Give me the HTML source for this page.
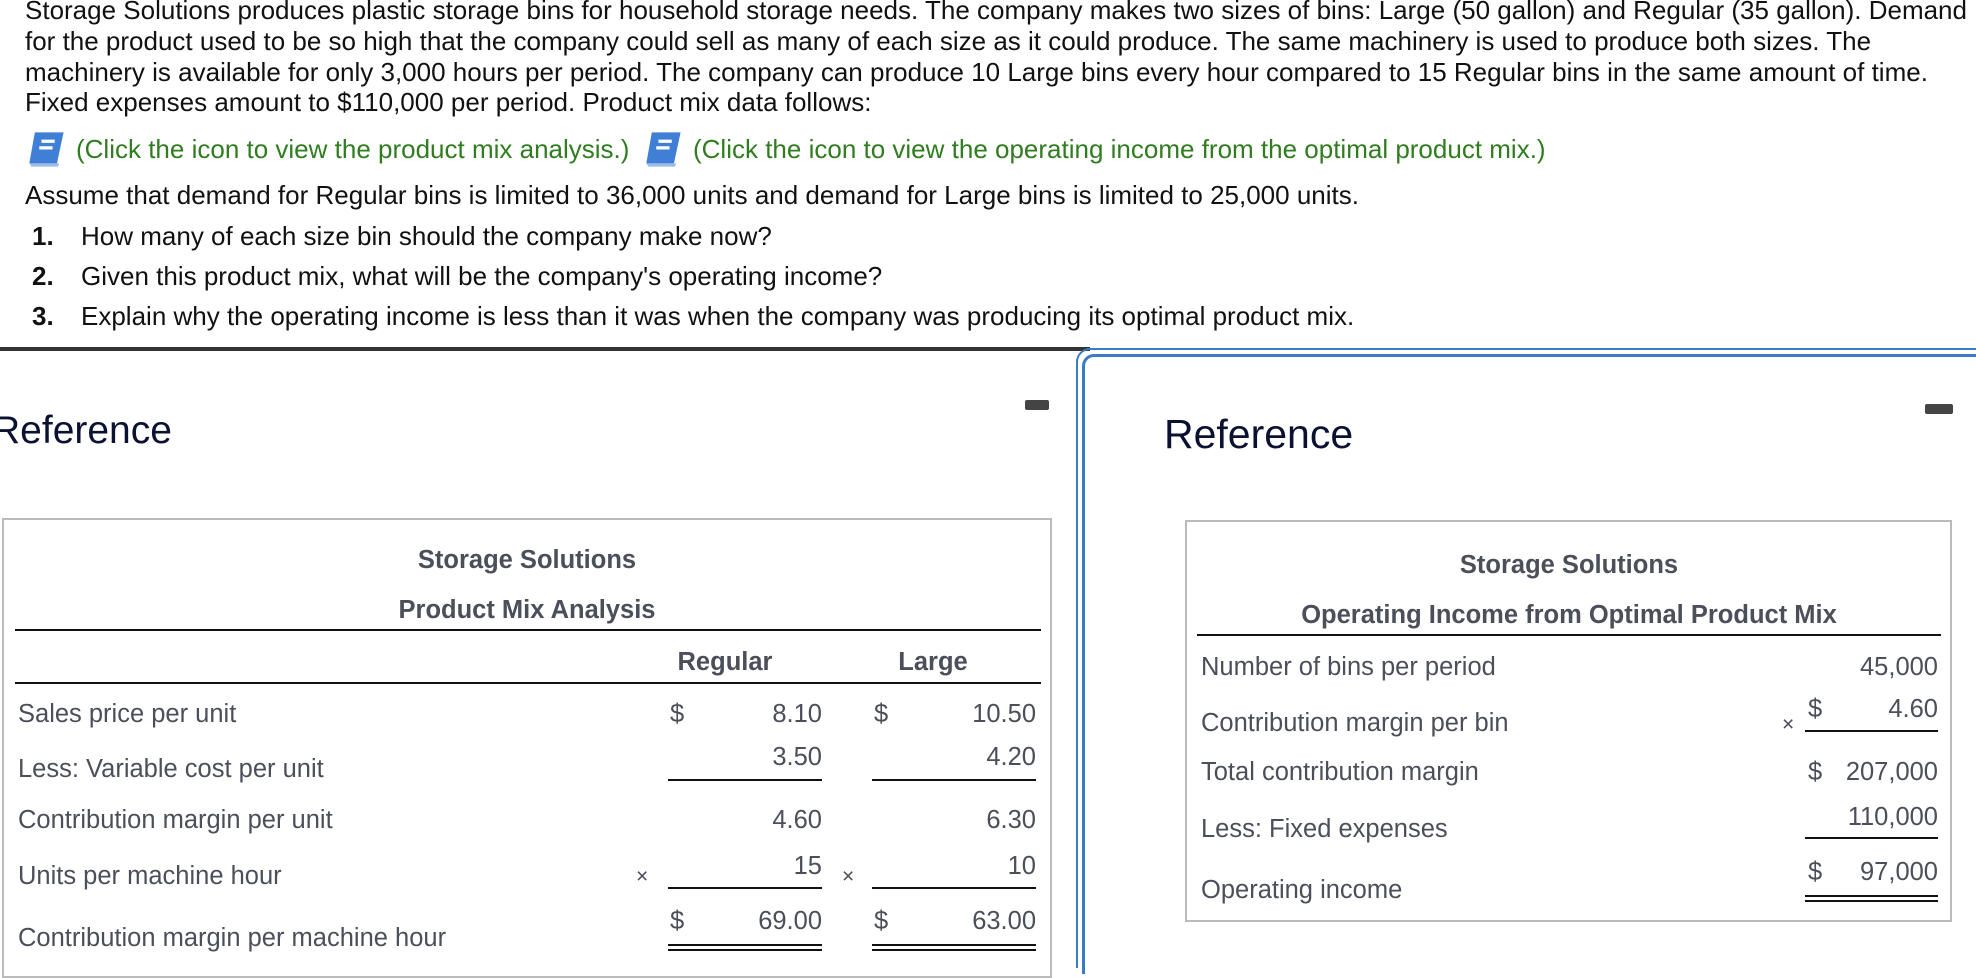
<!DOCTYPE html>
<html><head><meta charset="utf-8"><style>
*{margin:0;padding:0;box-sizing:border-box}
body{width:1976px;height:956px;overflow:hidden;background:#fff;font-family:"Liberation Sans",Arial,sans-serif;position:relative}
.t{position:absolute;white-space:nowrap;line-height:30px;height:30px}
.b{color:#111;font-size:26px}
.g{color:#2f7d1f;font-size:26px}
.tb{color:#4a4f5a;font-size:25.5px}
.h{font-weight:bold;color:#4a4f5a;font-size:25.5px}
.r{text-align:right}
.c{text-align:center}
.x{font-size:21px}
.ln{position:absolute;background:#111;height:2px}
.dl{position:absolute;border-top:2px solid #111;border-bottom:2px solid #111;height:7px}
.icon{position:absolute;width:42px;height:38px}
</style></head><body>
<div class="t b" style="left:25px;top:-5px">Storage Solutions produces plastic storage bins for household storage needs. The company makes two sizes of bins: Large (50 gallon) and Regular (35 gallon). Demand</div>
<div class="t b" style="left:25px;top:26px">for the product used to be so high that the company could sell as many of each size as it could produce. The same machinery is used to produce both sizes. The</div>
<div class="t b" style="left:25px;top:57px">machinery is available for only 3,000 hours per period. The company can produce 10 Large bins every hour compared to 15 Regular bins in the same amount of time.</div>
<div class="t b" style="left:25px;top:87px">Fixed expenses amount to $110,000 per period. Product mix data follows:</div>

<svg class="icon" style="left:26px;top:130px" viewBox="0 0 38 34"><path d="M8 2h26l-6 28H3z" fill="#3f7fd6"/><path d="M3 30l2 3h24l1-3z" fill="#9bbbe8"/><path d="M14 10h12M12 16h12" stroke="#fff" stroke-width="3"/></svg>
<div class="t g" style="left:76px;top:134px">(Click the icon to view the product mix analysis.)</div>
<svg class="icon" style="left:643px;top:130px" viewBox="0 0 38 34"><path d="M8 2h26l-6 28H3z" fill="#3f7fd6"/><path d="M3 30l2 3h24l1-3z" fill="#9bbbe8"/><path d="M14 10h12M12 16h12" stroke="#fff" stroke-width="3"/></svg>
<div class="t g" style="left:693px;top:134px">(Click the icon to view the operating income from the optimal product mix.)</div>

<div class="t b" style="left:25px;top:180px">Assume that demand for Regular bins is limited to 36,000 units and demand for Large bins is limited to 25,000 units.</div>
<div class="t b" style="left:32px;top:221px;font-weight:bold">1.</div><div class="t b" style="left:81px;top:221px">How many of each size bin should the company make now?</div>
<div class="t b" style="left:32px;top:261px;font-weight:bold">2.</div><div class="t b" style="left:81px;top:261px">Given this product mix, what will be the company's operating income?</div>
<div class="t b" style="left:32px;top:301px;font-weight:bold">3.</div><div class="t b" style="left:81px;top:301px">Explain why the operating income is less than it was when the company was producing its optimal product mix.</div>

<div style="position:absolute;left:0;top:347px;width:1090px;height:4px;background:#333"></div>
<div style="position:absolute;left:1076px;top:348px;width:920px;height:620px;border:2px solid #3a7bc8;border-right:none;border-bottom:none;border-top-left-radius:14px"></div>
<div style="position:absolute;left:1082px;top:354px;width:920px;height:620px;border:3px solid #3a7bc8;border-right:none;border-bottom:none;border-top-left-radius:12px"></div>

<div class="t" style="left:-8px;top:407px;font-size:39px;line-height:48px;height:48px;color:#0b1130">Reference</div>
<div style="position:absolute;left:1025px;top:400px;width:24px;height:10px;background:#444;border-radius:2px"></div>
<div class="t" style="left:1164px;top:410px;font-size:41px;line-height:48px;height:48px;color:#0b1130">Reference</div>
<div style="position:absolute;left:1925px;top:404px;width:28px;height:10px;background:#444;border-radius:2px"></div>

<!-- left table -->
<div style="position:absolute;left:2px;top:518px;width:1050px;height:460px;border:2px solid #bbb"></div>
<div class="t h c" style="left:277px;width:500px;top:545px">Storage Solutions</div>
<div class="t h c" style="left:277px;width:500px;top:595px">Product Mix Analysis</div>
<div class="ln" style="left:15px;width:1026px;top:629px"></div>
<div class="t h c" style="left:625px;width:200px;top:647px">Regular</div>
<div class="t h c" style="left:833px;width:200px;top:647px">Large</div>
<div class="ln" style="left:15px;width:1026px;top:682px"></div>

<div class="t tb" style="left:18px;top:699px">Sales price per unit</div>
<div class="t tb" style="left:670px;top:699px">$</div><div class="t tb r" style="left:722px;width:100px;top:699px">8.10</div>
<div class="t tb" style="left:874px;top:699px">$</div><div class="t tb r" style="left:936px;width:100px;top:699px">10.50</div>

<div class="t tb" style="left:18px;top:754px">Less: Variable cost per unit</div>
<div class="t tb r" style="left:722px;width:100px;top:742px">3.50</div>
<div class="t tb r" style="left:936px;width:100px;top:742px">4.20</div>
<div class="ln" style="left:668px;width:154px;top:779px"></div>
<div class="ln" style="left:872px;width:164px;top:779px"></div>

<div class="t tb" style="left:18px;top:805px">Contribution margin per unit</div>
<div class="t tb r" style="left:722px;width:100px;top:805px">4.60</div>
<div class="t tb r" style="left:936px;width:100px;top:805px">6.30</div>

<div class="t tb" style="left:18px;top:861px">Units per machine hour</div>
<div class="t tb x" style="left:636px;top:862px">×</div>
<div class="t tb r" style="left:722px;width:100px;top:851px">15</div>
<div class="t tb x" style="left:842px;top:862px">×</div>
<div class="t tb r" style="left:936px;width:100px;top:851px">10</div>
<div class="ln" style="left:668px;width:154px;top:887px"></div>
<div class="ln" style="left:872px;width:164px;top:887px"></div>

<div class="t tb" style="left:18px;top:923px">Contribution margin per machine hour</div>
<div class="t tb" style="left:670px;top:906px">$</div><div class="t tb r" style="left:722px;width:100px;top:906px">69.00</div>
<div class="t tb" style="left:874px;top:906px">$</div><div class="t tb r" style="left:936px;width:100px;top:906px">63.00</div>
<div class="dl" style="left:668px;width:154px;top:944px"></div>
<div class="dl" style="left:872px;width:164px;top:944px"></div>

<!-- right table -->
<div style="position:absolute;left:1185px;top:520px;width:767px;height:402px;border:2px solid #bbb"></div>
<div class="t h c" style="left:1319px;width:500px;top:550px">Storage Solutions</div>
<div class="t h c" style="left:1219px;width:700px;top:600px">Operating Income from Optimal Product Mix</div>
<div class="ln" style="left:1197px;width:744px;top:634px"></div>

<div class="t tb" style="left:1201px;top:652px">Number of bins per period</div>
<div class="t tb r" style="left:1738px;width:200px;top:652px">45,000</div>

<div class="t tb" style="left:1201px;top:708px">Contribution margin per bin</div>
<div class="t tb x" style="left:1782px;top:710px">×</div>
<div class="t tb" style="left:1808px;top:694px">$</div>
<div class="t tb r" style="left:1738px;width:200px;top:694px">4.60</div>
<div class="ln" style="left:1805px;width:133px;top:730px"></div>

<div class="t tb" style="left:1201px;top:757px">Total contribution margin</div>
<div class="t tb" style="left:1808px;top:757px">$</div>
<div class="t tb r" style="left:1738px;width:200px;top:757px">207,000</div>

<div class="t tb" style="left:1201px;top:814px">Less: Fixed expenses</div>
<div class="t tb r" style="left:1738px;width:200px;top:802px">110,000</div>
<div class="ln" style="left:1805px;width:133px;top:837px"></div>

<div class="t tb" style="left:1201px;top:875px">Operating income</div>
<div class="t tb" style="left:1808px;top:857px">$</div>
<div class="t tb r" style="left:1738px;width:200px;top:857px">97,000</div>
<div class="dl" style="left:1805px;width:133px;top:895px"></div>
</body></html>
